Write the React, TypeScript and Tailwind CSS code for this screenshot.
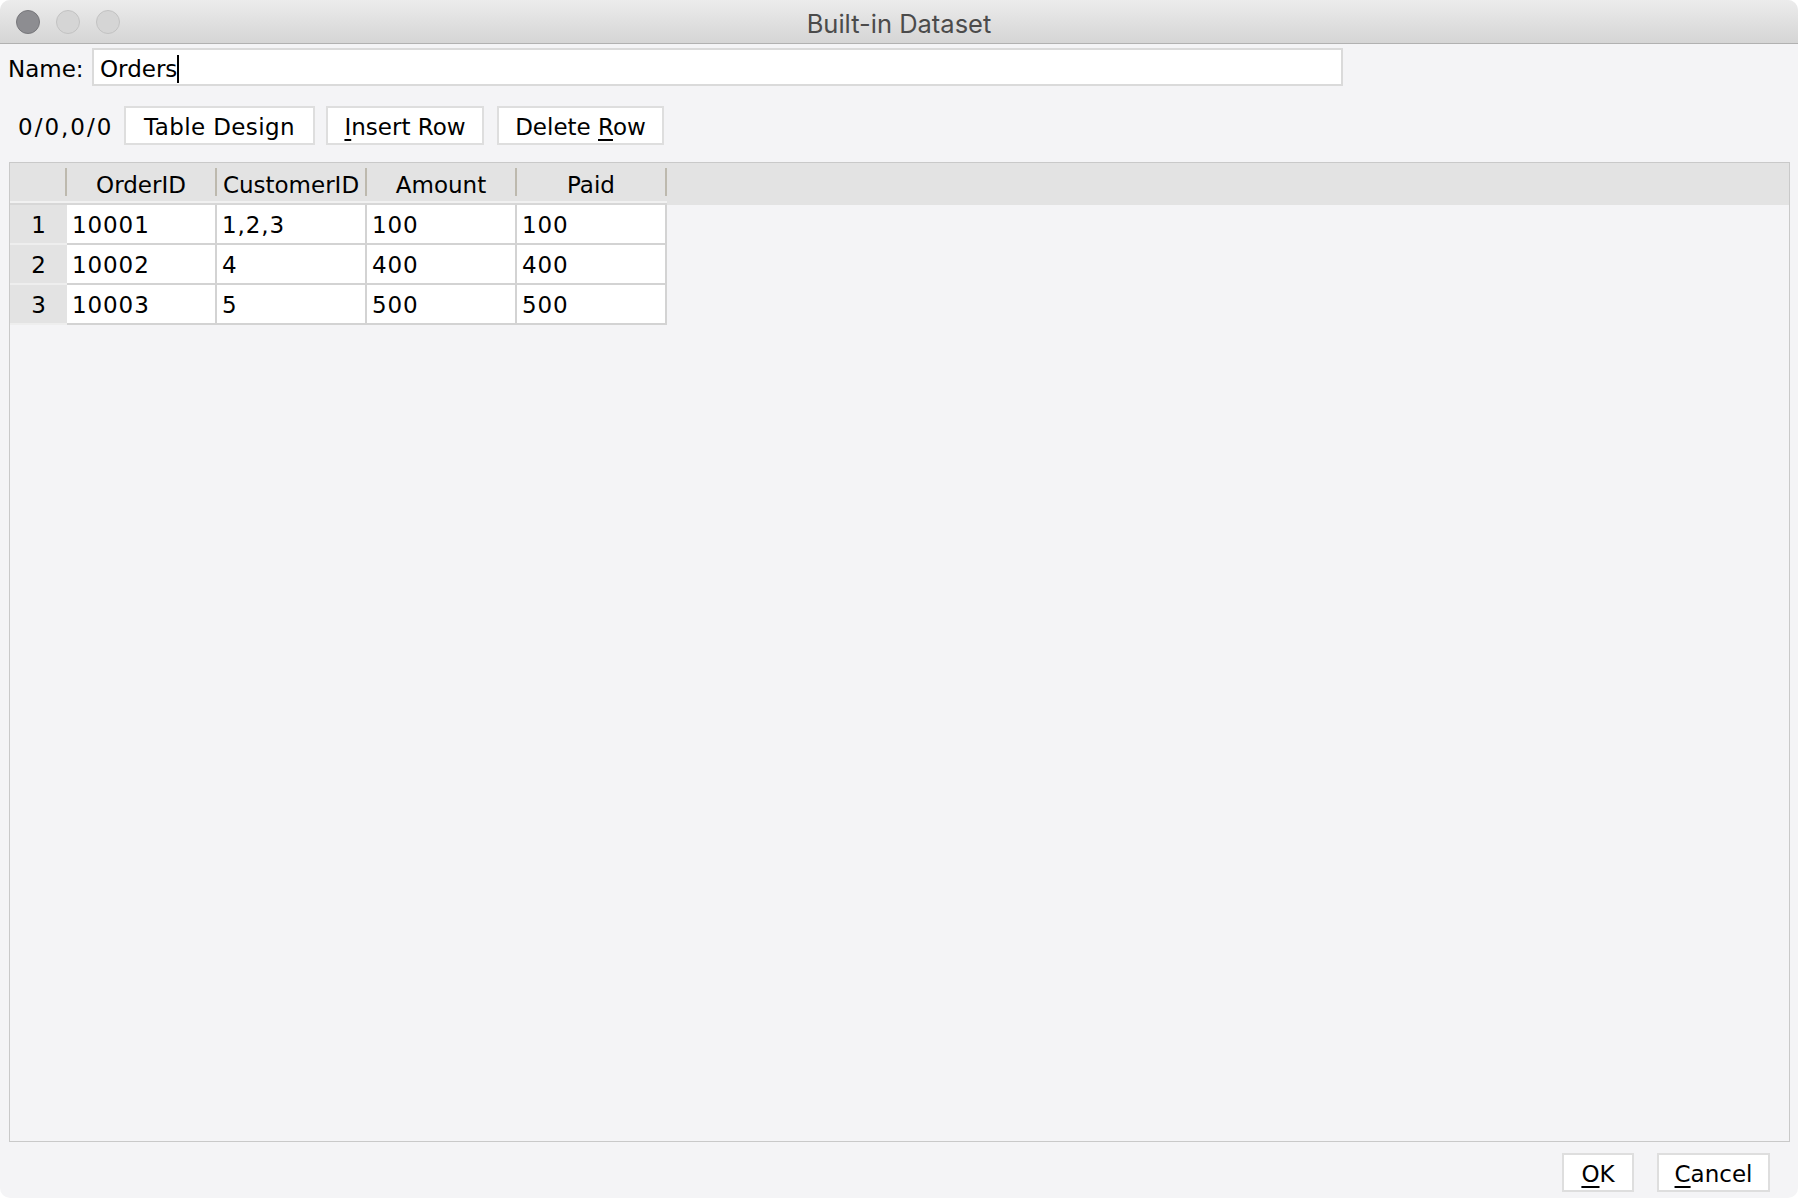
import React from "react";

const cols = ["OrderID", "CustomerID", "Amount", "Paid"];
const rows = [
  ["10001", "1,2,3", "100", "100"],
  ["10002", "4", "400", "400"],
  ["10003", "5", "500", "500"],
];

function Btn({ children, w }: { children: React.ReactNode; w: string }) {
  return (
    <div
      className={`${w} h-[39px] bg-white border-2 border-[#dedede] flex items-center justify-center shrink-0 pt-[4px]`}
    >
      {children}
    </div>
  );
}

export default function App() {
  return (
    <div className="w-[1798px] h-[1198px] bg-white">
      <div className="w-[1798px] h-[1198px] bg-[#f4f4f6] flex flex-col overflow-hidden rounded-[10px] font-['DejaVu_Sans',sans-serif] text-[23px] text-black leading-none">
        {/* Title bar */}
        <div className="relative h-[44px] shrink-0 bg-linear-to-b from-[#ececec] to-[#d5d5d5] border-b border-[#b1b1b1] flex items-center">
          <div className="flex gap-[16px] pl-[16px]">
            <div className="w-[24px] h-[24px] rounded-full bg-[#8d8d91] border border-[#77777b]" />
            <div className="w-[24px] h-[24px] rounded-full bg-[#d5d5d5] border border-[#c2c2c2]" />
            <div className="w-[24px] h-[24px] rounded-full bg-[#d5d5d5] border border-[#c2c2c2]" />
          </div>
          <div className="absolute inset-0 flex items-center justify-center pt-[4px] font-['Inter',sans-serif] text-[25.5px] text-[#4b4b4b]">
            Built-in Dataset
          </div>
        </div>

        {/* Name row */}
        <div className="mt-[4px] h-[38px] flex items-center shrink-0">
          <div className="w-[92px] pl-[8px] pt-[4px]">Name:</div>
          <div className="w-[1251px] h-[38px] bg-white border-2 border-[#dadada] flex items-center pl-[6px]">
            <span className="pt-[4px]">Orders</span>
            <span className="inline-block w-[2px] h-[28px] bg-black mt-[3px]" />
          </div>
        </div>

        {/* Button row */}
        <div className="mt-[20px] h-[39px] flex items-center shrink-0">
          <div className="pl-[18px] w-[124px] pt-[4px] tracking-[2px]">0/0,0/0</div>
          <Btn w="w-[191px]">
            <span className="tracking-[0.4px]">Table Design</span>
          </Btn>
          <div className="w-[11px]" />
          <Btn w="w-[158px]">
            <span>
              <span className="underline underline-offset-[4px]">I</span>nsert Row
            </span>
          </Btn>
          <div className="w-[13px]" />
          <Btn w="w-[167px]">
            <span>
              Delete <span className="underline underline-offset-[4px]">R</span>ow
            </span>
          </Btn>
        </div>

        {/* Table pane */}
        <div className="mt-[17px] ml-[9px] mr-[8px] h-[980px] shrink-0 border border-[#c9c9c9] flex flex-col">
          {/* Header */}
          <div className="flex h-[42px] bg-[#e3e3e3] shrink-0">
            <div className="flex flex-col">
              <div className="flex h-[38px] items-center">
                <div className="w-[55px]" />
                <div className="w-[2px] h-[28px] bg-[#bdb9ae]" />
                {cols.map((c) => (
                  <div key={c} className="flex items-center">
                    <div className="w-[148px] text-center pt-[6px]">{c}</div>
                    <div className="w-[2px] h-[28px] bg-[#bdb9ae]" />
                  </div>
                ))}
              </div>
              <div className="h-[2px] bg-[#f1f1f1]" />
              <div className="h-[2px] bg-[#d7d7d7]" />
            </div>
            <div className="flex-1" />
          </div>

          {/* Rows */}
          {rows.map((r, i) => (
            <div key={i} className="flex h-[40px] shrink-0">
              <div className="w-[57px] bg-[#e3e3e3] border-b-2 border-[#eeeeee] flex items-center justify-center pt-[2px]">
                {i + 1}
              </div>
              {r.map((v, j) => (
                <div
                  key={j}
                  className="w-[150px] bg-white border-r-2 border-b-2 border-[#d3d3d3] flex items-center pl-[5px] pt-[2px] tracking-[0.9px]"
                >
                  {v}
                </div>
              ))}
            </div>
          ))}
        </div>

        {/* Bottom buttons */}
        <div className="mt-[11px] flex justify-end pr-[28px] gap-[23px] shrink-0">
          <Btn w="w-[72px]">
            <span>
              <span className="underline underline-offset-[4px]">O</span>K
            </span>
          </Btn>
          <Btn w="w-[113px]">
            <span>
              <span className="underline underline-offset-[4px]">C</span>ancel
            </span>
          </Btn>
        </div>
      </div>
    </div>
  );
}
